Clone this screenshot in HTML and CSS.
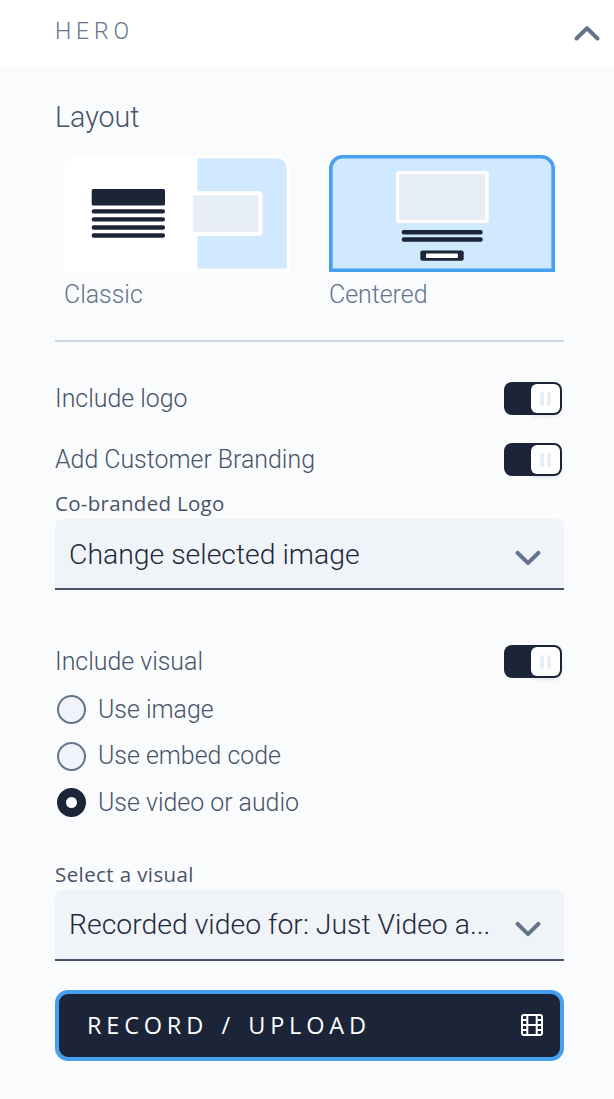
FILE: index.html
```html
<!DOCTYPE html>
<html lang="en">

<head>
    <meta charset="UTF-8">
    <meta name="viewport" content="width=device-width, initial-scale=1.0">
    <title>Hero Settings</title>
    <link rel="stylesheet" href="styles.css">
</head>

<body>
    <header class="panel-header">
        <span class="panel-title">HERO</span>
        <svg class="chevron" width="28" height="18" viewBox="0 0 28 18">
            <path d="M3.5 14.5L14 4.2L24.5 14.5" />
        </svg>
    </header>
    <main class="panel-body">
        <h3 class="section-title">Layout</h3>
        <div class="layouts">
            <div class="layout-option">
                <svg class="thumb" width="226" height="117" viewBox="0 0 226 117">
                    <path d="M0 117V13A13 13 0 0 1 13 0H213A13 13 0 0 1 226 13V117Z" fill="#fff" />
                    <path d="M133.3 3.3H212.7A10 10 0 0 1 222.7 13.3V113.5H133.3Z" fill="#d1e9ff" />
                    <path d="M129 36.3H195A3.5 3.5 0 0 1 198.5 39.8V77.2A3.5 3.5 0 0 1 195 80.7H129Z" fill="#fff" />
                    <rect x="129.3" y="40.3" width="65" height="36.5" fill="#e6edf5" />
                    <g fill="#1c2438">
                        <rect x="27.7" y="34" width="73.3" height="16.5" rx="1.5" />
                        <rect x="27.7" y="54.2" width="73.3" height="4.4" rx="2" />
                        <rect x="27.7" y="62.2" width="73.3" height="4.4" rx="2" />
                        <rect x="27.7" y="70.3" width="73.3" height="4.4" rx="2" />
                        <rect x="27.7" y="78.3" width="73.3" height="4.4" rx="2" />
                    </g>
                </svg>
                <span class="layout-name">Classic</span>
            </div>
            <div class="layout-option">
                <svg class="thumb" width="226" height="117" viewBox="0 0 226 117">
                    <path d="M1.8 115.2V13.5A11.7 11.7 0 0 1 13.5 1.8H212.5A11.7 11.7 0 0 1 224.2 13.5V115.2Z" fill="#d1e9ff" stroke="#479ff0" stroke-width="3.6" />
                    <rect x="67" y="16" width="92.7" height="52" rx="2.5" fill="#fff" />
                    <rect x="70.2" y="19" width="86" height="45.7" fill="#e6edf5" />
                    <g fill="#1c2438">
                        <rect x="72.7" y="75" width="81" height="4.5" rx="2" />
                        <rect x="72.7" y="82.2" width="81" height="4.5" rx="2" />
                        <rect x="91.3" y="95.6" width="43.4" height="10.2" rx="2" />
                    </g>
                    <rect x="97" y="98.4" width="32" height="4.6" rx="1" fill="#fff" />
                </svg>
                <span class="layout-name">Centered</span>
            </div>
        </div>
        <hr class="divider">

        <div class="toggle-row">
            <span>Include logo</span>
            <span class="toggle"><span class="knob"></span></span>
        </div>
        <div class="toggle-row">
            <span>Add Customer Branding</span>
            <span class="toggle"><span class="knob"></span></span>
        </div>

        <label class="field-label logo-label">Co-branded Logo</label>
        <div class="select">
            <span class="select-value">Change selected image</span>
            <svg class="chevron" width="28" height="18" viewBox="0 0 28 18">
                <path d="M3.5 3.8L14 14.1L24.5 3.8" />
            </svg>
        </div>

        <div class="toggle-row visual-row">
            <span>Include visual</span>
            <span class="toggle"><span class="knob"></span></span>
        </div>
        <div class="radios">
            <div class="radio-row"><span class="radio"></span>Use image</div>
            <div class="radio-row"><span class="radio"></span>Use embed code</div>
            <div class="radio-row"><span class="radio checked"></span>Use video or audio</div>
        </div>

        <label class="field-label visual-label">Select a visual</label>
        <div class="select">
            <span class="select-value">Recorded video for: Just Video a...</span>
            <svg class="chevron" width="28" height="18" viewBox="0 0 28 18">
                <path d="M3.5 3.8L14 14.1L24.5 3.8" />
            </svg>
        </div>

        <button class="record-btn">
            <span>RECORD / UPLOAD</span>
            <svg class="film" width="22" height="22" viewBox="0 0 22 22">
                <rect x="1" y="1" width="20" height="20" rx="2" />
                <path d="M6.3 1V21M15.7 1V21M6.3 11H15.7M1 6H6.3M1 11H6.3M1 16H6.3M15.7 6H21M15.7 11H21M15.7 16H21" />
            </svg>
        </button>
    </main>
</body>

</html>
```
FILE: styles.css
```css
* {
    box-sizing: border-box;
}

body {
    margin: 0;
    min-height: 1099px;
    background-color: #fafbfd;
    font-family: Roboto, sans-serif;
    font-weight: 300;
    font-size: 24.9px;
    color: #475369;
}

.panel-header {
    height: 66px;
    padding: 0 13px 6px 55px;
    display: flex;
    align-items: center;
    justify-content: space-between;
    background-color: #fff;
}

.panel-header .chevron {
    margin-top: 6px;
}

.panel-title {
    padding-top: 2px;
    font-size: 23px;
    letter-spacing: 4.8px;
    color: #64748b;
}

.chevron {
    flex: none;
    fill: none;
    stroke: #64748b;
    stroke-width: 4;
    stroke-linecap: round;
    stroke-linejoin: round;
}

.panel-body {
    padding: 34px 50px 0 55px;
}

.section-title {
    margin: 0;
    font-size: 28.6px;
    font-weight: 300;
    line-height: 34px;
}

.layouts {
    display: flex;
    gap: 39px;
    padding: 21px 9px 0;
}

.layout-option {
    display: flex;
    flex-direction: column;
    width: 226px;
}

.layout-name {
    margin-top: 7px;
    line-height: 32px;
    color: #64748b;
}

.divider {
    height: 2px;
    margin: 29px 0 40px;
    border: none;
    background-color: #cbd9e8;
}

.toggle-row {
    height: 33px;
    margin-bottom: 28px;
    padding-right: 2px;
    display: flex;
    align-items: center;
    justify-content: space-between;
}

.toggle {
    width: 58px;
    height: 33px;
    padding: 2px;
    display: flex;
    justify-content: flex-end;
    border-radius: 8px;
    background-color: #1c2438;
}

.knob {
    width: 29px;
    height: 29px;
    display: flex;
    align-items: center;
    justify-content: center;
    gap: 3px;
    border-radius: 6px;
    background-color: #fff;
    box-shadow: 0 3px 5px rgba(28, 36, 56, 0.12);
}

.knob::before,
.knob::after {
    content: "";
    width: 4px;
    height: 14px;
    border-radius: 2px;
    background-color: #e8eef6;
}

.field-label {
    display: block;
    padding-bottom: 1px;
    font-family: "Open Sans", sans-serif;
    font-size: 20.5px;
    font-weight: 400;
    line-height: 29px;
}

.logo-label {
    margin-top: -15px;
    letter-spacing: 0.3px;
}

.select {
    height: 71px;
    padding: 1px 22px 0 14px;
    display: flex;
    align-items: center;
    justify-content: space-between;
    border-bottom: 2px solid #475369;
    border-radius: 7px 7px 0 0;
    background-color: #f0f3f8;
}

.select .chevron {
    margin-top: 8px;
}

.select-value {
    font-size: 28.4px;
    color: #1e293b;
    white-space: nowrap;
}

.visual-row {
    margin: 55px 0 8px;
}

.radio-row {
    height: 46.6px;
    padding-left: 2px;
    display: flex;
    align-items: center;
}

.radio {
    width: 29px;
    height: 29px;
    margin: 1px 12px 0 0;
    border: 2px solid #64748b;
    border-radius: 50%;
    background-color: #f0f4fa;
}

.radio.checked {
    border: 9px solid #1c2438;
    background-color: #fff;
}

.visual-label {
    margin-top: 34.2px;
    letter-spacing: 0.4px;
}

.record-btn {
    width: 100%;
    height: 71px;
    margin-top: 29px;
    padding: 0 17px 0 28px;
    display: flex;
    align-items: center;
    justify-content: space-between;
    border: 4px solid #479ff0;
    border-radius: 13px;
    background-color: #1c2438;
    color: #fff;
    font-family: "Open Sans", sans-serif;
    font-size: 23.5px;
    letter-spacing: 4.8px;
    word-spacing: 2.5px;
}

.film {
    fill: none;
    stroke: #fff;
    stroke-width: 2;
}
```
